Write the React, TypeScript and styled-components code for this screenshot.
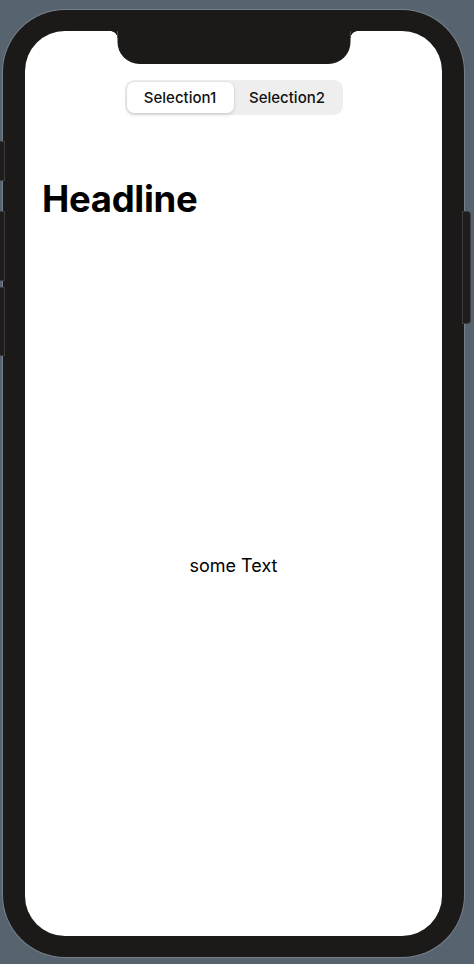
import React, { useState } from "react";
import styled, { createGlobalStyle } from "styled-components";

const GlobalStyle = createGlobalStyle`
  html, body {
    margin: 0;
    padding: 0;
    background: #57636f;
  }
  body {
    font-family: Inter, "Noto Sans", "Liberation Sans", sans-serif;
    -webkit-font-smoothing: antialiased;
  }
`;

const Page = styled.div`
  width: 474px;
  height: 964px;
  display: flex;
  align-items: flex-start;
  padding: 10px 10px 0 3px;
  box-sizing: border-box;
  background: #57636f;
  overflow: hidden;
`;

const Phone = styled.div`
  position: relative;
  width: 461px;
  height: 947px;
  box-sizing: border-box;
  padding: 21px 22px;
  border-radius: 62px;
  background: #1b1a19;
  box-shadow: 0 0 0 1px #75808b;
  display: flex;
`;

const SideButton = styled.div<{ $side: "left" | "right"; $top: number; $height: number }>`
  position: absolute;
  top: ${(p) => p.$top}px;
  height: ${(p) => p.$height}px;
  ${(p) => (p.$side === "left" ? "left: -4px;" : "right: -6px;")}
  width: ${(p) => (p.$side === "left" ? 5 : 7)}px;
  background: #1e1d1c;
  border-radius: ${(p) => (p.$side === "left" ? "2px 0 0 2px" : "0 3px 3px 0")};
  box-shadow: 0 0 0 1px #3a3c3f;
`;

const Screen = styled.div`
  position: relative;
  flex: 1;
  background: #ffffff;
  border-radius: 40px;
  overflow: hidden;
  display: flex;
  flex-direction: column;
  padding: 49px 17px 26px;
  box-sizing: border-box;
`;

const Notch = styled.div`
  position: absolute;
  top: 0;
  left: 50%;
  transform: translateX(-50%);
  width: 233px;
  height: 33px;
  background: #1b1a19;
  border-radius: 0 0 22px 22px;

  &::before,
  &::after {
    content: "";
    position: absolute;
    top: 0;
    width: 7px;
    height: 7px;
  }
  &::before {
    left: -7px;
    background: radial-gradient(circle at 0 100%, transparent 6.5px, #1b1a19 7px);
  }
  &::after {
    right: -7px;
    background: radial-gradient(circle at 100% 100%, transparent 6.5px, #1b1a19 7px);
  }
`;

const Segmented = styled.div`
  align-self: center;
  display: flex;
  width: 218px;
  height: 35px;
  padding: 2px;
  box-sizing: border-box;
  border-radius: 9px;
  background: #eeeeef;
`;

const Segment = styled.button<{ $active: boolean }>`
  flex: 1;
  border: none;
  margin: ${(p) => (p.$active ? "0 3px 0 0" : "0 0 0 -3px")};
  padding: 0;
  border-radius: 7px;
  font-family: Inter, "Noto Sans", "Liberation Sans", sans-serif;
  font-size: 15px;
  font-weight: 500;
  color: #111111;
  cursor: pointer;
  background: ${(p) => (p.$active ? "#ffffff" : "transparent")};
  box-shadow: ${(p) =>
    p.$active ? "0 2px 4px rgba(0,0,0,0.12), 0 0 0 0.5px rgba(0,0,0,0.05)" : "none"};
`;

const Headline = styled.h1`
  margin: 62px 0 0;
  font-size: 36.5px;
  line-height: 44px;
  font-weight: 700;
  color: #000000;
  letter-spacing: -0.3px;
`;

const Content = styled.div`
  flex: 1;
  display: flex;
  align-items: center;
  justify-content: center;
`;

const BodyText = styled.p`
  margin: 0;
  font-size: 18px;
  line-height: 22px;
  color: #000000;
`;

export default function App() {
  const [selected, setSelected] = useState(0);
  return (
    <>
      <GlobalStyle />
      <Page>
        <Phone>
          <SideButton $side="left" $top={132} $height={38} />
          <SideButton $side="left" $top={202} $height={68} />
          <SideButton $side="left" $top={278} $height={67} />
          <SideButton $side="right" $top={202} $height={111} />
          <Screen>
            <Notch />
            <Segmented>
              {["Selection1", "Selection2"].map((label, i) => (
                <Segment key={label} $active={selected === i} onClick={() => setSelected(i)}>
                  {label}
                </Segment>
              ))}
            </Segmented>
            <Headline>Headline</Headline>
            <Content>
              <BodyText>some Text</BodyText>
            </Content>
          </Screen>
        </Phone>
      </Page>
    </>
  );
}
